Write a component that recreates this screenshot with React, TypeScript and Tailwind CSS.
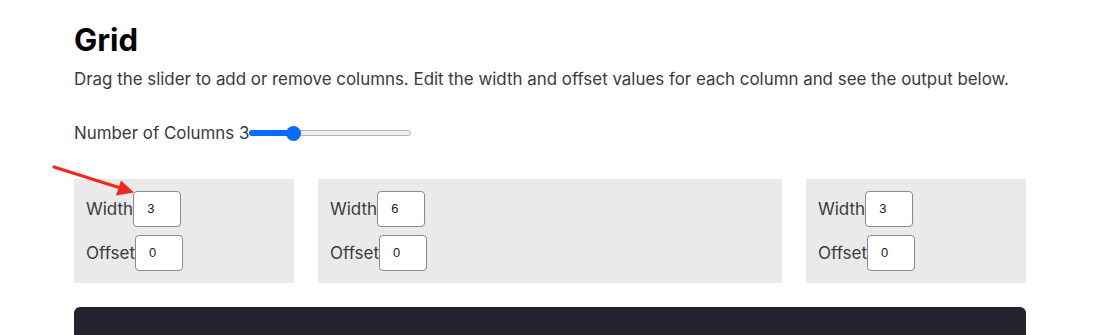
import React from "react";

function Field({ label, value }: { label: string; value: string }) {
  return (
    <div className="flex items-center">
      <span className="text-[17px] leading-6 text-[#3b3b3b]">{label}</span>
      <div className="flex h-9 w-12 items-center rounded-[4px] border border-[#8a8a8a] bg-white pl-[13px] text-[13px] text-[#222] [font-family:'Liberation_Sans',Arial,sans-serif]">
        {value}
      </div>
    </div>
  );
}

function Col({ span, w, o }: { span: string; w: string; o: string }) {
  return (
    <div className={`${span} flex flex-col gap-2 bg-[#eaeaea] p-3`}>
      <Field label="Width" value={w} />
      <Field label="Offset" value={o} />
    </div>
  );
}

export default function App() {
  return (
    <div className="relative min-h-[335px] overflow-hidden bg-white [font-family:Inter,'Noto_Sans',sans-serif]">
      <div className="ml-[74px] w-[952px] pt-[22px]">
        <h1 className="text-[31px] font-bold leading-9 text-black">Grid</h1>
        <p className="mt-[9px] text-[16.9px] leading-6 text-[#3a3a3a]">
          Drag the slider to add or remove columns. Edit the width and offset values for each column and see the output below.
        </p>
        <div className="mt-[30px] flex items-center text-[16.9px] leading-6 text-[#3a3a3a]">
          <span>Number of Columns 3</span>
          <div className="relative h-[14px] w-[162px]">
            <div className="absolute left-0 right-0 top-[4px] h-[6px] rounded-full border border-[#b5b5b5] bg-[#efefef]" />
            <div className="absolute left-0 top-[4px] h-[6px] w-[46px] rounded-full bg-[#0a6cff]" />
            <div className="absolute left-[37px] top-0 h-[15px] w-[15px] rounded-full bg-[#0a6cff]" />
          </div>
        </div>
        <div className="mt-[34px] grid grid-cols-12 gap-6">
          <Col span="col-span-3" w="3" o="0" />
          <Col span="col-span-6" w="6" o="0" />
          <Col span="col-span-3" w="3" o="0" />
        </div>
        <div className="mt-6 h-[80px] rounded-md bg-[#24232d]" />
      </div>
      <svg className="pointer-events-none absolute left-0 top-0" width="200" height="220" viewBox="0 0 200 220">
        <line x1="54" y1="167" x2="122" y2="188.5" stroke="#f3261f" strokeWidth="3" strokeLinecap="round" />
        <polygon points="134,192.5 116,195.5 121,180.5" fill="#f3261f" />
      </svg>
    </div>
  );
}
